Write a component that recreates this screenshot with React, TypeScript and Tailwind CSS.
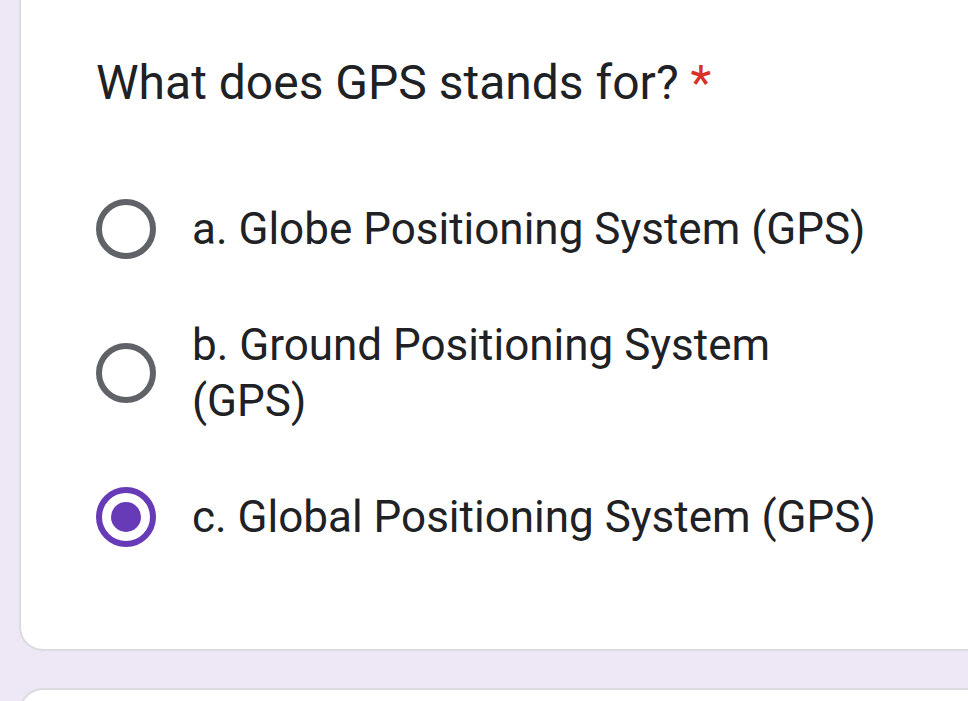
import React from "react";

function Radio({ checked }: { checked?: boolean }) {
  return (
    <div
      className={
        "flex h-[60px] w-[60px] shrink-0 items-center justify-center rounded-full border-[6px] " +
        (checked ? "border-[#673ab7]" : "border-[#5f6368]")
      }
    >
      {checked && <div className="h-[30px] w-[30px] rounded-full bg-[#673ab7]" />}
    </div>
  );
}

const options = [
  { label: "a. Globe Positioning System (GPS)", checked: false },
  { label: "b. Ground Positioning System (GPS)", checked: false },
  { label: "c. Global Positioning System (GPS)", checked: true },
];

export default function App() {
  return (
    <div
      className="h-[701px] w-[968px] overflow-hidden bg-[#ede7f6] pl-[19px]"
      style={{ fontFamily: "Roboto, 'Noto Sans', sans-serif" }}
    >
      <div className="-mt-[40px] h-[691px] w-[1000px] rounded-b-[24px] border-2 border-t-0 border-r-0 border-[#dadce0] bg-white pl-[75px] pt-[95px]">
        <div className="text-[48px] leading-[56px] text-[#202124]">
          What does GPS stands for? <span className="text-[#d93025]">*</span>
        </div>
        <div className="mt-[88px] flex flex-col gap-[58px]">
          {options.map((o) => (
            <div key={o.label} className="flex items-center gap-[36px]">
              <Radio checked={o.checked} />
              <div className="w-[690px] text-[44px] leading-[56px] text-[#202124]">{o.label}</div>
            </div>
          ))}
        </div>
      </div>
      <div className="mt-[37px] h-[40px] w-[1000px] rounded-t-[24px] border-2 border-b-0 border-r-0 border-[#dadce0] bg-white" />
    </div>
  );
}
